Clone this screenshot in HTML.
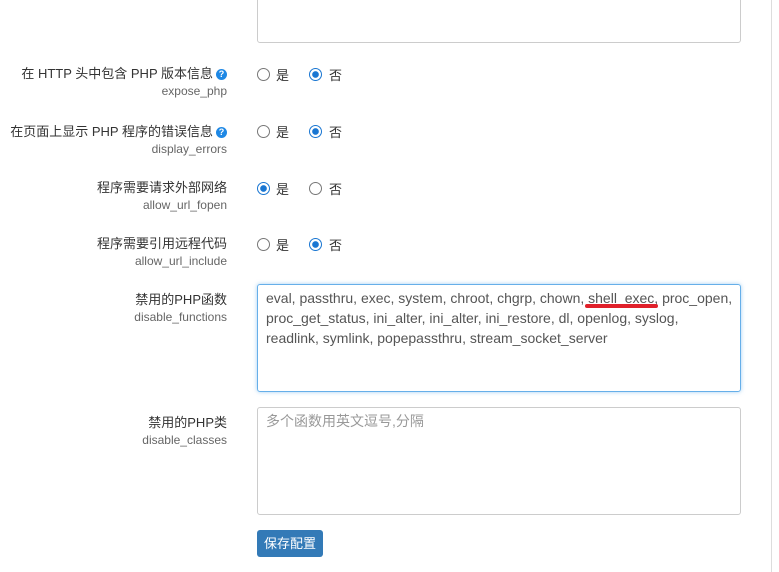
<!DOCTYPE html><html><head><meta charset="utf-8"><style>
body{margin:0;width:779px;height:572px;background:#fff;font-family:"Liberation Sans","Noto Sans CJK SC",sans-serif;color:#333;position:relative;overflow:hidden}
.vl{position:absolute;left:771px;top:0;width:1px;height:572px;background:#ddd}
.ta{position:absolute;left:257px;width:484px;border:1px solid #ccc;border-radius:3px;box-sizing:border-box;font-size:14px;line-height:20px;padding:3px 2px 5px 8px;color:#555;white-space:nowrap}
.lab{position:absolute;right:552px;text-align:right;font-size:13px;white-space:nowrap}
.lab .s{display:block;color:#666;font-size:12px;margin-top:2px}
.q{display:inline-block;width:11px;height:11px;border-radius:50%;background:#1e88e5;color:#fff;font-size:9px;line-height:11px;text-align:center;font-weight:bold;vertical-align:1px;margin-left:3px}
.r{position:absolute;font-size:13px}
.c{position:absolute;width:11px;height:11px;border:1px solid #777;border-radius:50%;top:2px}
.c.on{border-color:#1976d2;background:radial-gradient(circle,#1976d2 3px,#fff 3.6px)}
.t{position:absolute;top:-1px}
.btn{position:absolute;left:257px;top:530px;width:66px;height:27px;background:#337ab7;border-radius:3px;color:#fff;font-size:13px;line-height:27px;text-align:center}
</style></head><body>
<div class="vl"></div>
<div class="ta" style="top:-5px;height:48px"></div>
<div class="lab" style="top:63px">在 HTTP 头中包含 PHP 版本信息<span class="q">?</span><span class="s">expose_php</span></div>
<div class="lab" style="top:121px">在页面上显示 PHP 程序的错误信息<span class="q">?</span><span class="s">display_errors</span></div>
<div class="lab" style="top:177px">程序需要请求外部网络<span class="s">allow_url_fopen</span></div>
<div class="lab" style="top:233px">程序需要引用远程代码<span class="s">allow_url_include</span></div>
<div class="lab" style="top:289px">禁用的PHP函数<span class="s">disable_functions</span></div>
<div class="lab" style="top:412px">禁用的PHP类<span class="s">disable_classes</span></div>
<div class="r" style="left:257px;top:66px"><span class="c" style="left:0"></span><span class="t" style="left:19px">是</span><span class="c on" style="left:52px"></span><span class="t" style="left:72px">否</span></div>
<div class="r" style="left:257px;top:123px"><span class="c" style="left:0"></span><span class="t" style="left:19px">是</span><span class="c on" style="left:52px"></span><span class="t" style="left:72px">否</span></div>
<div class="r" style="left:257px;top:180px"><span class="c on" style="left:0"></span><span class="t" style="left:19px">是</span><span class="c" style="left:52px"></span><span class="t" style="left:72px">否</span></div>
<div class="r" style="left:257px;top:236px"><span class="c" style="left:0"></span><span class="t" style="left:19px">是</span><span class="c on" style="left:52px"></span><span class="t" style="left:72px">否</span></div>
<div class="ta" style="top:284px;height:108px;border-color:#66afe9;box-shadow:0 0 4px rgba(102,175,233,.6)">eval, passthru, exec, system, chroot, chgrp, chown, shell_exec, proc_open,<br>proc_get_status, ini_alter, ini_alter, ini_restore, dl, openlog, syslog,<br>readlink, symlink, popepassthru, stream_socket_server</div>
<div style="position:absolute;left:585px;top:304px;width:73px;height:4px;background:#e0202a;border-radius:2px"></div>
<div class="ta" style="top:407px;height:108px;color:#999">多个函数用英文逗号,分隔</div>
<div class="btn">保存配置</div>
</body></html>
